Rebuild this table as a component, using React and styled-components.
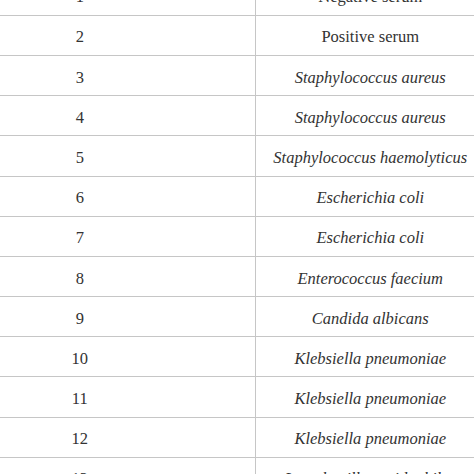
import React from "react";
import styled, { createGlobalStyle } from "styled-components";

const rows = [
  { id: "1", name: "Negative serum", italic: false },
  { id: "2", name: "Positive serum", italic: false },
  { id: "3", name: "Staphylococcus aureus", italic: true },
  { id: "4", name: "Staphylococcus aureus", italic: true },
  { id: "5", name: "Staphylococcus haemolyticus", italic: true },
  { id: "6", name: "Escherichia coli", italic: true },
  { id: "7", name: "Escherichia coli", italic: true },
  { id: "8", name: "Enterococcus faecium", italic: true },
  { id: "9", name: "Candida albicans", italic: true },
  { id: "10", name: "Klebsiella pneumoniae", italic: true },
  { id: "11", name: "Klebsiella pneumoniae", italic: true },
  { id: "12", name: "Klebsiella pneumoniae", italic: true },
  { id: "13", name: "Lactobacillus acidophilus", italic: true },
];

const GlobalStyle = createGlobalStyle`
  html, body {
    margin: 0;
    padding: 0;
    background: #ffffff;
    overflow: hidden;
  }
`;

const Viewport = styled.div`
  width: 474px;
  height: 474px;
  overflow: hidden;
`;

const Table = styled.div`
  width: 580px;
  margin-left: -95px;
  margin-top: -24.4px;
  font-family: "Liberation Serif", "Times New Roman", serif;
  font-size: 16.5px;
  color: #333333;
`;

const Row = styled.div`
  display: grid;
  grid-template-columns: 350.5px 1fr;
  height: 40.2px;
  box-sizing: border-box;
  border-bottom: 1px solid #c6c6c6;
`;

const Cell = styled.div`
  display: flex;
  align-items: center;
  justify-content: center;
  white-space: nowrap;
  padding-top: 4px;
  font-style: ${(p) => (p.$italic ? "italic" : "normal")};
  border-right: ${(p) => (p.$divider ? "1px solid #c6c6c6" : "none")};
`;

export default function App() {
  return (
    <Viewport>
      <GlobalStyle />
      <Table>
        {rows.map((r) => (
          <Row key={r.id}>
            <Cell $divider>{r.id}</Cell>
            <Cell $italic={r.italic}>{r.name}</Cell>
          </Row>
        ))}
      </Table>
    </Viewport>
  );
}
